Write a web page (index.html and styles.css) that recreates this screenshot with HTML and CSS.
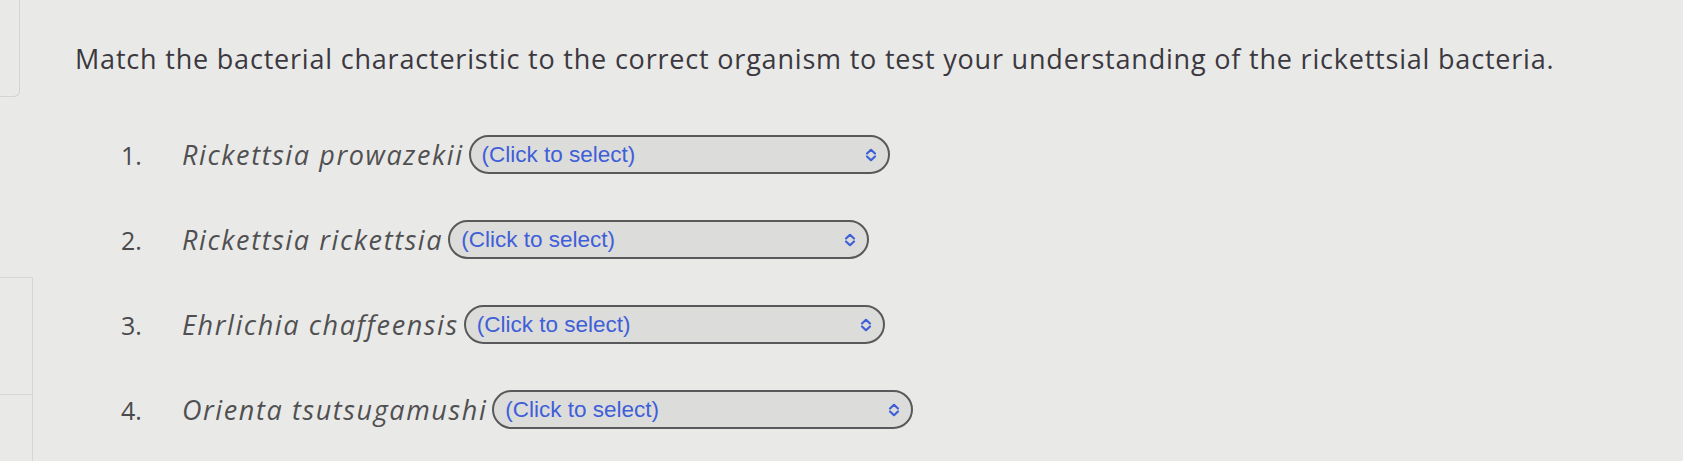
FILE: index.html
```html
<!DOCTYPE html>
<html lang="en">
<head>
    <meta charset="UTF-8">
    <meta name="viewport" content="width=device-width, initial-scale=1.0">
    <title>Rickettsial bacteria matching</title>
    <link rel="stylesheet" href="styles.css">
</head>
<body>

    <div class="page">
        <div class="gutter">
            <div class="gutter-tab"></div>
            <div class="gutter-box"></div>
            <div class="gutter-rest"></div>
        </div>

        <div class="question">
            <p class="prompt">Match the bacterial characteristic to the correct organism to test your understanding of the rickettsial bacteria.</p>

            <ol class="match-list">
                <li class="match-row">
                    <span class="num">1.</span>
                    <span class="organism">Rickettsia prowazekii</span>
                    <div class="picker">
                        <span class="picker-text">(Click to select)</span>
                        <svg class="picker-icon" width="12" height="14" viewBox="0 0 12 14"><path d="M2 5.5 L6 1.8 L10 5.5 M2 8.5 L6 12.2 L10 8.5" fill="none" stroke="#3f5fd8" stroke-width="2.2" stroke-linecap="round" stroke-linejoin="round"/></svg>
                    </div>
                </li>
                <li class="match-row">
                    <span class="num">2.</span>
                    <span class="organism">Rickettsia rickettsia</span>
                    <div class="picker">
                        <span class="picker-text">(Click to select)</span>
                        <svg class="picker-icon" width="12" height="14" viewBox="0 0 12 14"><path d="M2 5.5 L6 1.8 L10 5.5 M2 8.5 L6 12.2 L10 8.5" fill="none" stroke="#3f5fd8" stroke-width="2.2" stroke-linecap="round" stroke-linejoin="round"/></svg>
                    </div>
                </li>
                <li class="match-row">
                    <span class="num">3.</span>
                    <span class="organism">Ehrlichia chaffeensis</span>
                    <div class="picker">
                        <span class="picker-text">(Click to select)</span>
                        <svg class="picker-icon" width="12" height="14" viewBox="0 0 12 14"><path d="M2 5.5 L6 1.8 L10 5.5 M2 8.5 L6 12.2 L10 8.5" fill="none" stroke="#3f5fd8" stroke-width="2.2" stroke-linecap="round" stroke-linejoin="round"/></svg>
                    </div>
                </li>
                <li class="match-row">
                    <span class="num">4.</span>
                    <span class="organism">Orienta tsutsugamushi</span>
                    <div class="picker">
                        <span class="picker-text">(Click to select)</span>
                        <svg class="picker-icon" width="12" height="14" viewBox="0 0 12 14"><path d="M2 5.5 L6 1.8 L10 5.5 M2 8.5 L6 12.2 L10 8.5" fill="none" stroke="#3f5fd8" stroke-width="2.2" stroke-linecap="round" stroke-linejoin="round"/></svg>
                    </div>
                </li>
            </ol>
        </div>
    </div>

</body>
</html>
```

FILE: styles.css
```css
body {
    margin: 0;
    background-color: #e9e9e7;
    font-family: "Open Sans", Lato, sans-serif;
    color: #3b3840;
    height: 461px;
    overflow: hidden;
}
.page {
    display: flex;
    height: 100%;
}
.gutter {
    width: 33px;
    display: flex;
    flex-direction: column;
    flex-shrink: 0;
}
.gutter-tab {
    width: 20px;
    height: 97px;
    border-right: 1px solid #d4d4d2;
    border-bottom: 1px solid #d4d4d2;
    border-bottom-right-radius: 6px;
    box-sizing: border-box;
}
.gutter-box {
    margin-top: 180px;
    height: 118px;
    border: 1px solid #d6d6d4;
    border-left: none;
    box-sizing: border-box;
}
.gutter-rest {
    flex: 1;
    border-right: 1px solid #d6d6d4;
}
.question {
    padding-left: 42px;
}
.prompt {
    margin: 42px 0 0 0;
    font-size: 27px;
    line-height: 33px;
    letter-spacing: 0.8px;
}
.match-list {
    list-style: none;
    margin: 60px 0 0 0;
    padding: 0;
    display: flex;
    flex-direction: column;
    gap: 46px;
}
.match-row {
    display: flex;
    align-items: center;
    height: 39px;
}
.num {
    width: 61px;
    margin-left: 46px;
    font-size: 25px;
    color: #4a4a4c;
}
.organism {
    font-style: italic;
    font-size: 27px;
    letter-spacing: 1.6px;
    color: #505052;
    margin-right: 5px;
}
.picker {
    width: 421px;
    height: 39px;
    box-sizing: border-box;
    border: 2px solid #59595b;
    border-radius: 20px;
    background-color: #dcdcdb;
    display: flex;
    align-items: center;
    justify-content: space-between;
    padding: 0 11px 0 11px;
}
.picker-text {
    font-family: "Liberation Sans", Arial, sans-serif;
    font-size: 22.5px;
    color: #3f5fd8;
}
.picker-icon {
    display: block;
}
```
